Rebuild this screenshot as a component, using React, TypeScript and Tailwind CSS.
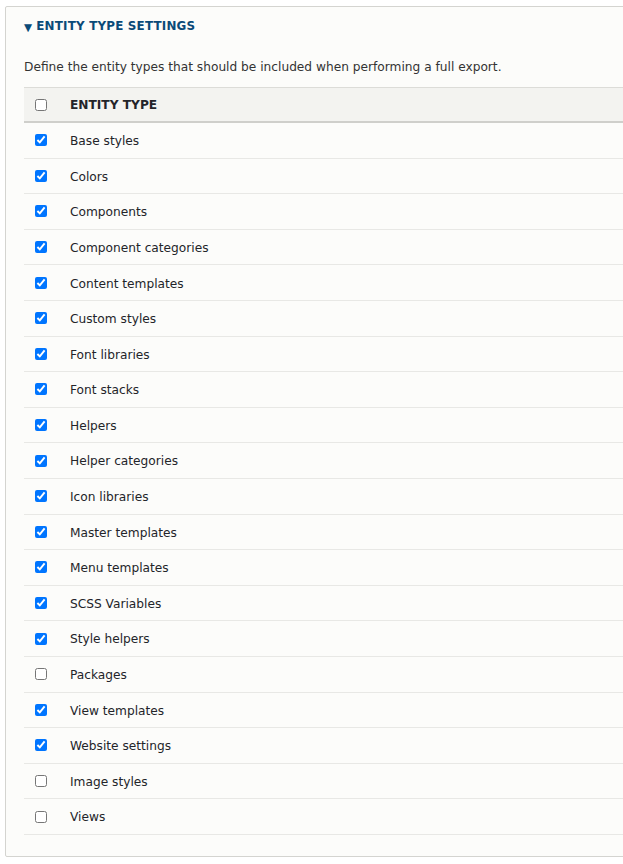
const entityTypes: { label: string; checked: boolean }[] = [
  { label: 'Base styles', checked: true },
  { label: 'Colors', checked: true },
  { label: 'Components', checked: true },
  { label: 'Component categories', checked: true },
  { label: 'Content templates', checked: true },
  { label: 'Custom styles', checked: true },
  { label: 'Font libraries', checked: true },
  { label: 'Font stacks', checked: true },
  { label: 'Helpers', checked: true },
  { label: 'Helper categories', checked: true },
  { label: 'Icon libraries', checked: true },
  { label: 'Master templates', checked: true },
  { label: 'Menu templates', checked: true },
  { label: 'SCSS Variables', checked: true },
  { label: 'Style helpers', checked: true },
  { label: 'Packages', checked: false },
  { label: 'View templates', checked: true },
  { label: 'Website settings', checked: true },
  { label: 'Image styles', checked: false },
  { label: 'Views', checked: false },
];

export default function App() {
  return (
    <div className="min-h-screen w-full overflow-hidden bg-white pl-[5px] pt-[6px] font-['DejaVu_Sans',sans-serif] text-[#232429]">
      <div className="w-[660px] h-[851px] rounded-[2px] border border-[#d4d4d0] bg-[#fcfcfa] pl-[18px]">
        {/* Summary */}
        <div className="flex h-[40px] items-center gap-[4px] text-[11.9px] font-bold uppercase tracking-[0.2px] text-[#0a4a78]">
          <span className="text-[10.5px] leading-none">▼</span>
          <span>Entity type settings</span>
        </div>

        <p className="mt-[11px] text-[12.2px] leading-[18px] text-[#333]">
          Define the entity types that should be included when performing a full export.
        </p>

        <div className="mt-[11px]">
          <div className="flex h-[36px] items-center border-t border-b-2 border-t-[#dcdcd8] border-b-[#cfcfcb] bg-[#f3f3f0]">
            <div className="flex w-[46px] pl-[11px]">
              <input type="checkbox" className="m-0 h-[12px] w-[12px]" />
            </div>
            <span className="pt-[1px] text-[12.2px] font-bold uppercase text-[#232429]">Entity type</span>
          </div>
          {entityTypes.map((t) => (
            <div
              key={t.label}
              className="flex h-[35.6px] items-center border-b border-[#e8e8e5]"
            >
              <div className="flex w-[46px] pl-[11px]">
                <input type="checkbox" defaultChecked={t.checked} className="m-0 h-[12px] w-[12px]" />
              </div>
              <span className="pt-[2px] text-[12.2px] text-[#232429]">{t.label}</span>
            </div>
          ))}
        </div>
      </div>
    </div>
  );
}
